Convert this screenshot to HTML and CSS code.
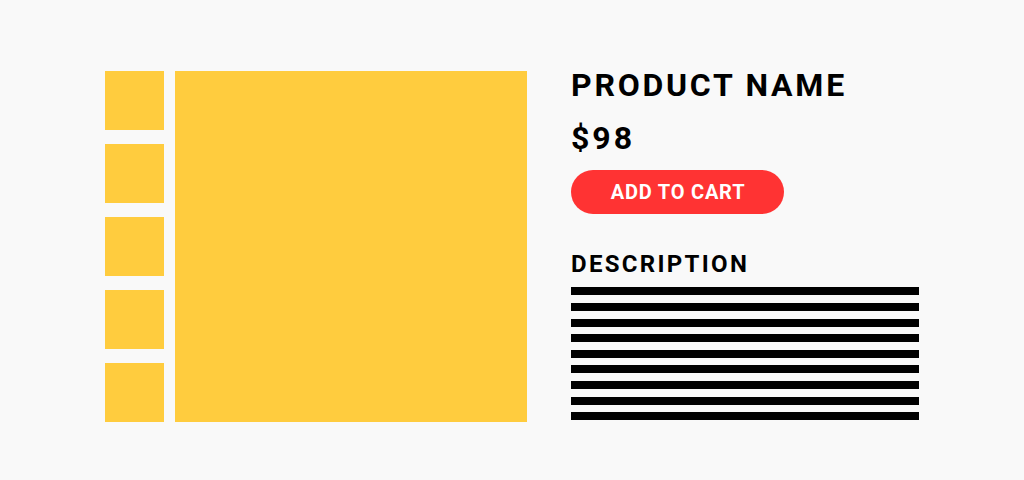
FILE: index.html
```html
<!DOCTYPE html>
<html lang="en">
<head>
<meta charset="utf-8">
<title>Product</title>
<link rel="stylesheet" href="styles.css">
</head>
<body>
<main class="product">
  <section class="gallery">
    <div class="thumbs">
      <div class="thumb"></div>
      <div class="thumb"></div>
      <div class="thumb"></div>
      <div class="thumb"></div>
      <div class="thumb"></div>
    </div>
    <div class="hero"></div>
  </section>
  <section class="info">
    <h1 class="title">PRODUCT NAME</h1>
    <div class="price">$98</div>
    <button class="cart">ADD TO CART</button>
    <h2 class="desc-title">DESCRIPTION</h2>
    <div class="desc">
      <div class="line"></div>
      <div class="line"></div>
      <div class="line"></div>
      <div class="line"></div>
      <div class="line"></div>
      <div class="line"></div>
      <div class="line"></div>
      <div class="line"></div>
      <div class="line"></div>
    </div>
  </section>
</main>
</body>
</html>
```
FILE: styles.css
```css
* { box-sizing: border-box; }
html, body { margin: 0; padding: 0; }
body {
  background: #f9f9f9;
  font-family: Roboto, "Liberation Sans", sans-serif;
  color: #000;
  width: 1024px;
  height: 480px;
}
.product {
  display: flex;
  justify-content: center;
  align-items: flex-start;
  gap: 44px;
  padding-top: 71px;
}
.gallery {
  display: flex;
  gap: 11px;
}
.thumbs {
  display: flex;
  flex-direction: column;
  gap: 14px;
}
.thumb {
  width: 59px;
  height: 59px;
  background: #ffcc3e;
}
.hero {
  width: 352px;
  height: 351px;
  background: #ffcc3e;
}
.info {
  width: 348px;
  display: flex;
  flex-direction: column;
  align-items: flex-start;
}
.title {
  margin: -2.5px 0 0;
  font-size: 32px;
  line-height: 32px;
  font-weight: 700;
  letter-spacing: 2.75px;
}
.price {
  margin-top: 21.5px;
  font-size: 32px;
  line-height: 32px;
  font-weight: 700;
  letter-spacing: 3px;
}
.cart {
  margin-top: 16px;
  width: 213px;
  height: 44px;
  border: 0;
  border-radius: 22px;
  background: #ff3333;
  color: #fff;
  font-family: inherit;
  font-size: 20px;
  line-height: 20px;
  font-weight: 700;
  letter-spacing: 0.8px;
  padding: 0 0 0 1px;
}
.desc-title {
  margin: 37.5px 0 0;
  font-size: 24px;
  line-height: 24px;
  font-weight: 700;
  letter-spacing: 2.3px;
}
.desc {
  margin-top: 11.8px;
  width: 348px;
  display: flex;
  flex-direction: column;
  gap: 7.625px;
}
.line {
  height: 8px;
  background: #000;
}
```
